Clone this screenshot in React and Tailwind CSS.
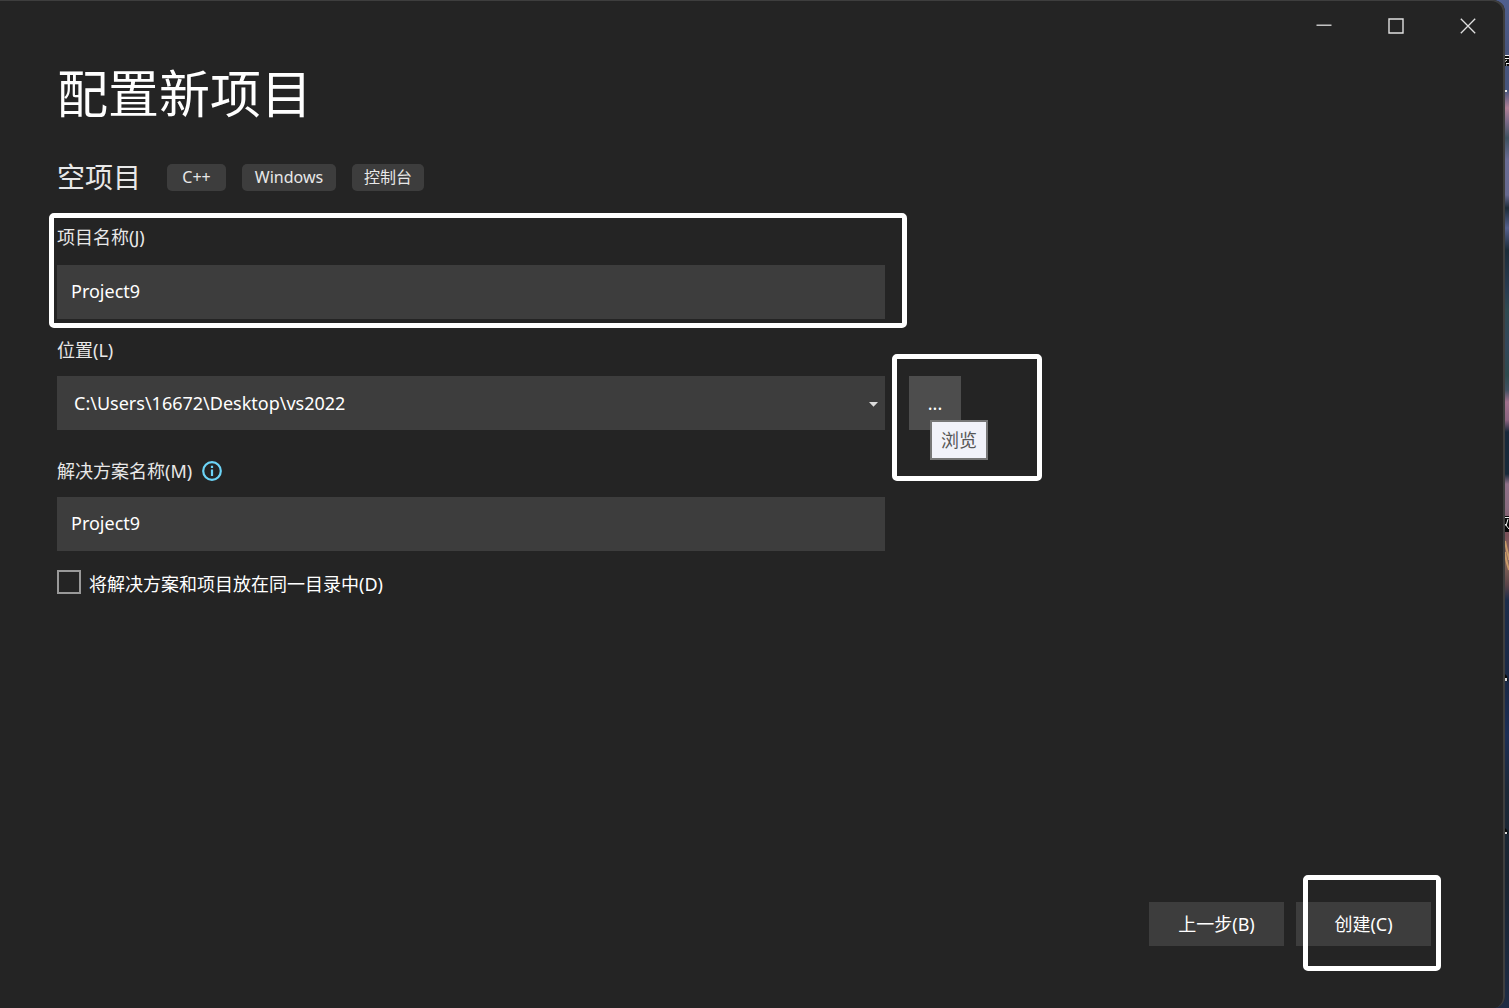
import { useState } from "react";

const tags = [
    { name: "C++", width: "min-w-[59px]" },
    { name: "Windows", width: "min-w-[94px]" },
    { name: "控制台", width: "min-w-[72px]" },
];

const locations = ["C:\\Users\\16672\\Desktop\\vs2022"];

function Highlight({ className }) {
    return (
        <div
            aria-hidden="true"
            className={`absolute border-[5px] border-white rounded-[5px] pointer-events-none ${className}`}
        />
    );
}

function TitleBar() {
    return (
        <header className="flex justify-end h-[52px] pr-px text-[#e0e0e0]">
            <button type="button" aria-label="最小化" className="w-[72px] flex items-center justify-center">
                <svg width="16" height="16" viewBox="0 0 16 16" stroke="currentColor" strokeWidth="1.3">
                    <path d="M0.5 7.2H15.5" />
                </svg>
            </button>
            <button type="button" aria-label="最大化" className="w-[72px] flex items-center justify-center">
                <svg width="16" height="16" viewBox="0 0 16 16" fill="none" stroke="currentColor" strokeWidth="1.4">
                    <path d="M1 1H15V15H1Z" />
                </svg>
            </button>
            <button type="button" aria-label="关闭" className="w-[72px] flex items-center justify-center">
                <svg width="16" height="16" viewBox="0 0 16 16" stroke="currentColor" strokeWidth="1.3">
                    <path d="M0.8 0.8L15.2 15.2M15.2 0.8L0.8 15.2" />
                </svg>
            </button>
        </header>
    );
}

function InfoIcon() {
    return (
        <svg width="20" height="20" viewBox="0 0 20 20" fill="none" stroke="#6cd4f7" aria-hidden="true">
            <circle cx="10" cy="10" r="8.8" strokeWidth="2.2" />
            <path d="M10 8.6V15M10 4.8V7" strokeWidth="2.2" />
        </svg>
    );
}

// Bits of the desktop that show past the window's right edge
function DesktopEdge() {
    return (
        <svg className="absolute right-0 top-0 w-1 h-full" aria-hidden="true">
            <path d="M0 55H4V66H0Z" fill="#080808" />
            <path d="M0 55.5H4M0 58.5H4M2 60L0 61.5M1 63.5H4M1 65H2" stroke="#f0f0f0" fill="none" />
            <path d="M0 90H2V92H0Z" fill="#e8e8e8" />
            <path d="M0 516H4V532H0Z" fill="#080808" />
            <path d="M0 517.5H4M3 519L1 526M0 524L4 529" stroke="#f0f0f0" fill="none" />
            <path d="M0 541C2 553 4 556 4 560M0 552C1 562 3 566 4 570" stroke="#c99b6b" strokeWidth="2" fill="none" />
            <path d="M0 674L2 676L3 681H0Z" fill="#080808" />
            <path d="M0 678H2V681H0Z" fill="#d8d8d8" />
            <path d="M0 828L2 830L3 834H0Z" fill="#080808" />
            <path d="M0 832H2V834H0Z" fill="#d8d8d8" />
        </svg>
    );
}

export default function App() {
    const [projectName, setProjectName] = useState("Project9");
    const [solutionName, setSolutionName] = useState("Project9");
    const [location, setLocation] = useState(locations[0]);
    const [sameFolder, setSameFolder] = useState(false);

    return (
        <div className="relative min-h-screen flex pr-1 bg-[linear-gradient(#4f5f8f_0px,#48547c_50px,#46547c_90px,#b08097_108px,#7a6a88_122px,#3f5260_138px,#6a6c94_160px,#66698f_195px,#1d2c38_208px,#55608c_228px,#1c2c38_250px,#2a3c50_290px,#304a50_310px,#33475a_345px,#2e4a4c_375px,#405060_390px,#a0708c_402px,#8b6480_420px,#18283a_432px,#182a3a_474px,#8f7088_484px,#8a6c80_508px,#7a5058_535px,#8a6a5c_560px,#5a4448_585px,#1d2d4a_600px,#1a2844_680px,#1c2e54_735px,#1c2836_790px,#1a2430_880px,#1e2c44_1008px)] font-['Noto_Sans','Noto_Sans_CJK_SC',sans-serif] text-lg leading-6 text-[#e8e8e8]">
            <DesktopEdge />
            <div className="relative flex-1 flex flex-col rounded-r-xl bg-[#242424] shadow-[inset_-2px_1px_0_#3e3e3e]">
                <TitleBar />

                <main className="flex-1 px-[57px] pt-[11px]">
                    <h1 className="text-[51px] leading-[60px] text-white">配置新项目</h1>

                    <div className="flex items-center h-9 mt-9">
                        <h2 className="text-[28px] leading-9 mr-[26px]">空项目</h2>
                        <ul className="flex gap-4">
                            {tags.map((tag) => (
                                <li
                                    key={tag.name}
                                    className={`h-[27px] px-3 rounded-[5px] bg-[#3d3d3d] text-base text-center leading-[27px] ${tag.width}`}
                                >
                                    {tag.name}
                                </li>
                            ))}
                        </ul>
                    </div>

                    <form className="max-w-[828px]">
                        <div className="relative mt-[30px]">
                            <label htmlFor="project-name" className="block mb-4">
                                项目名称(J)
                            </label>
                            <input
                                id="project-name"
                                type="text"
                                value={projectName}
                                onChange={(e) => setProjectName(e.target.value)}
                                className="block w-full h-[54px] px-[14px] pb-0.5 bg-[#3d3d3d] text-white outline-none"
                            />
                            <Highlight className="-left-2 -right-[22px] -top-3 -bottom-[9px]" />
                        </div>

                        <div className="mt-[19px]">
                            <label htmlFor="location" className="block mb-[14px]">
                                位置(L)
                            </label>
                            <div className="relative">
                                <select
                                    id="location"
                                    value={location}
                                    onChange={(e) => setLocation(e.target.value)}
                                    className="block w-full h-[54px] px-[17px] appearance-none bg-[#3d3d3d] text-white outline-none"
                                >
                                    {locations.map((path) => (
                                        <option key={path}>{path}</option>
                                    ))}
                                </select>
                                <svg
                                    width="9"
                                    height="5"
                                    viewBox="0 0 9 5"
                                    fill="#dcdcdc"
                                    aria-hidden="true"
                                    className="absolute right-[7px] top-[26px] pointer-events-none"
                                >
                                    <path d="M0 0H9L4.5 4.8Z" />
                                </svg>
                                <div className="absolute left-full top-0 ml-6">
                                    <button
                                        type="button"
                                        aria-describedby="browse-tip"
                                        className="w-[52px] h-[54px] bg-[#4d4d4d] text-white"
                                    >
                                        ...
                                    </button>
                                    <div
                                        id="browse-tip"
                                        role="tooltip"
                                        className="absolute left-[21px] top-11 w-[58px] h-10 border-2 border-[#767676] bg-[#f1f2f9] text-[#575757] text-center leading-9"
                                    >
                                        浏览
                                    </div>
                                    <Highlight className="-left-[17px] -top-[22px] w-[150px] h-[127px]" />
                                </div>
                            </div>
                        </div>

                        <div className="mt-[29px]">
                            <div className="flex items-center gap-[10px] mb-[14px]">
                                <label htmlFor="solution-name">解决方案名称(M)</label>
                                <InfoIcon />
                            </div>
                            <input
                                id="solution-name"
                                type="text"
                                value={solutionName}
                                onChange={(e) => setSolutionName(e.target.value)}
                                className="block w-full h-[54px] px-[14px] pb-0.5 bg-[#3d3d3d] text-white outline-none"
                            />
                        </div>

                        <div className="flex items-start gap-2 mt-[19px]">
                            <input
                                id="same-folder"
                                type="checkbox"
                                checked={sameFolder}
                                onChange={(e) => setSameFolder(e.target.checked)}
                                className="size-6 appearance-none border-2 border-[#999999] checked:bg-[#999999]"
                            />
                            <label htmlFor="same-folder" className="pt-0.5 text-white">
                                将解决方案和项目放在同一目录中(D)
                            </label>
                        </div>
                    </form>
                </main>

                <footer className="flex justify-end gap-3 pr-[74px] pb-[62px] text-white">
                    <button type="button" className="w-[135px] h-11 bg-[#3d3d3d]">
                        上一步(B)
                    </button>
                    <div className="relative">
                        <button type="button" className="block w-[135px] h-11 bg-[#3d3d3d]">
                            创建(C)
                        </button>
                        <Highlight className="left-[7px] -right-[10px] -top-[27px] -bottom-[25px]" />
                    </div>
                </footer>
            </div>
        </div>
    );
}
